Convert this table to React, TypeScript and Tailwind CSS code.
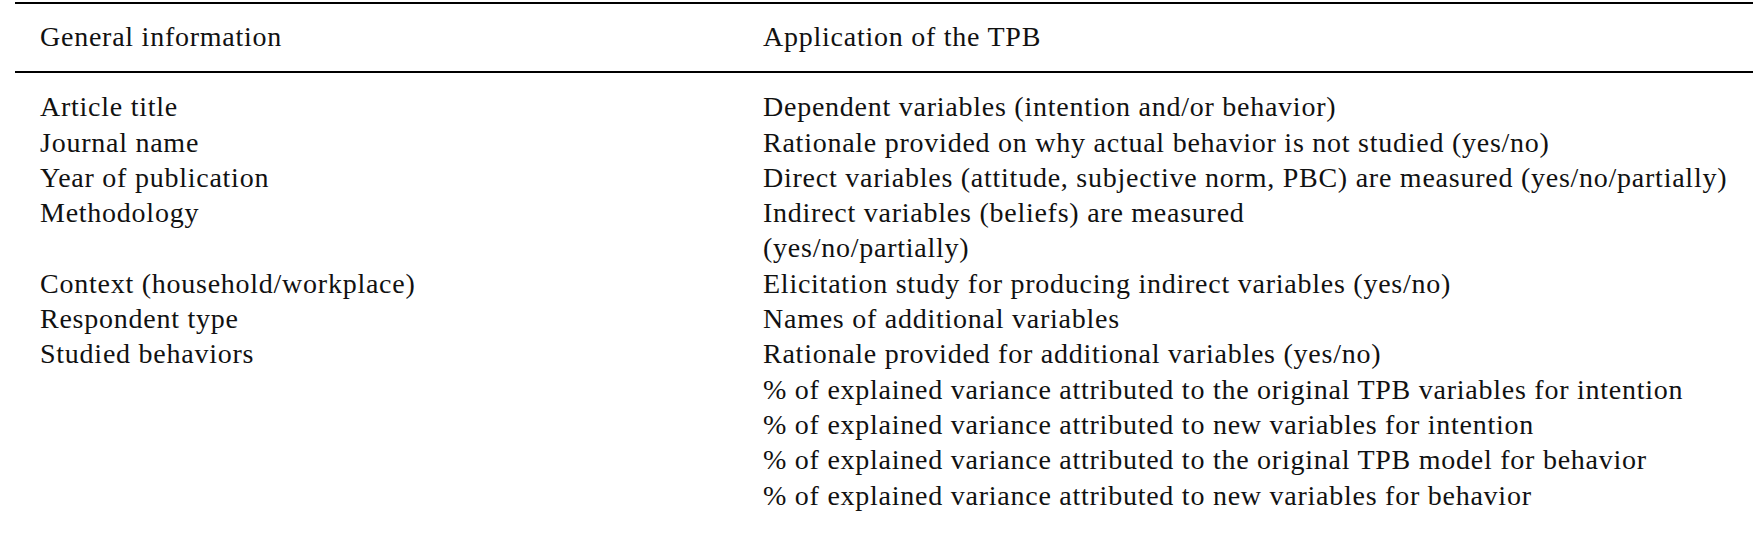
const LEFT = [
  "Article title",
  "Journal name",
  "Year of publication",
  "Methodology",
  "",
  "Context (household/workplace)",
  "Respondent type",
  "Studied behaviors",
];

const RIGHT = [
  "Dependent variables (intention and/or behavior)",
  "Rationale provided on why actual behavior is not studied (yes/no)",
  "Direct variables (attitude, subjective norm, PBC) are measured (yes/no/partially)",
  "Indirect variables (beliefs) are measured",
  "(yes/no/partially)",
  "Elicitation study for producing indirect variables (yes/no)",
  "Names of additional variables",
  "Rationale provided for additional variables (yes/no)",
  "% of explained variance attributed to the original TPB variables for intention",
  "% of explained variance attributed to new variables for intention",
  "% of explained variance attributed to the original TPB model for behavior",
  "% of explained variance attributed to new variables for behavior",
];

export default function App() {
  return (
    <div className="w-[1760px] h-[533px] bg-white text-[#111] font-['Liberation_Serif',serif] text-[28px] leading-[35.3px] tracking-[0.75px] pt-[2px]">
      <div className="ml-[15px] w-[1738px]">
        {/* header */}
        <div className="grid grid-cols-[723px_1fr] border-y-2 border-black pl-[25px] pt-[15px] pb-[17px]">
          <div>General information</div>
          <div>Application of the TPB</div>
        </div>

        {/* body */}
        <div className="grid grid-cols-[723px_1fr] pl-[25px] pt-[16px]">
          <div>
            {LEFT.map((t, i) => (
              <div key={i} className="h-[35.3px] whitespace-nowrap">{t}</div>
            ))}
          </div>
          <div>
            {RIGHT.map((t, i) => (
              <div key={i} className="h-[35.3px] whitespace-nowrap">{t}</div>
            ))}
          </div>
        </div>
      </div>
    </div>
  );
}
